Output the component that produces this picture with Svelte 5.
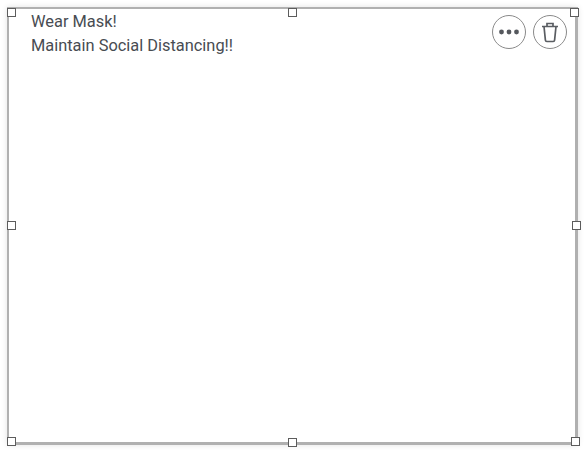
<script>
  const handles = ['tl', 'tc', 'tr', 'ml', 'mr', 'bl', 'bc', 'br'];
</script>

<main class="page">
  <div class="frame">
    {#each handles as h}
      <span class="handle {h}"></span>
    {/each}
    <div class="content">
      <div class="message">
        <p>Wear Mask!</p>
        <p>Maintain Social Distancing!!</p>
      </div>
      <div class="actions">
        <button class="round" aria-label="More">
          <svg width="24" height="8" viewBox="0 0 24 8">
            <circle cx="4.5" cy="4" r="2.4" />
            <circle cx="12" cy="4" r="2.4" />
            <circle cx="19.5" cy="4" r="2.4" />
          </svg>
        </button>
        <button class="round" aria-label="Delete">
          <svg class="trash" width="20" height="22" viewBox="0 0 20 22">
            <path d="M2 5.5h16M7 5.5V2.5h6v3M4 5.5l1.4 13.7c.1.9.6 1.3 1.4 1.3h6.4c.8 0 1.3-.4 1.4-1.3L16 5.5" />
          </svg>
        </button>
      </div>
    </div>
  </div>
</main>

<style>
  :global(body) {
    margin: 0;
    background: #fff;
  }

  .page {
    width: 585px;
    height: 450px;
    box-sizing: border-box;
    padding: 7px 0 0 7px;
    overflow: hidden;
    font-family: Roboto, "Liberation Sans", sans-serif;
  }

  .frame {
    position: relative;
    width: 571px;
    height: 438px;
    box-sizing: border-box;
    border: 2px solid #b0b0b0;
    border-right-width: 3px;
    border-bottom-width: 3px;
    box-shadow: 0 0 6px rgba(0, 0, 0, 0.12);
  }

  .content {
    display: flex;
    justify-content: space-between;
    padding: 1px 8px 0 22px;
  }

  .message p {
    margin: 0;
    font-size: 16.4px;
    line-height: 24px;
    color: #484c52;
  }

  .actions {
    display: flex;
    gap: 7px;
    padding-top: 5px;
  }

  .round {
    display: flex;
    align-items: center;
    justify-content: center;
    width: 34px;
    height: 34px;
    padding: 0;
    border: 1.5px solid #8a8a8a;
    border-radius: 50%;
    background: #fff;
  }

  .round circle {
    fill: #55585d;
  }

  .trash path {
    fill: none;
    stroke: #5a5d62;
    stroke-width: 1.7;
  }

  .handle {
    position: absolute;
    width: 9px;
    height: 9px;
    box-sizing: border-box;
    border: 1.5px solid #5c5c5c;
    background: #fff;
  }

  .tl { left: -2px; top: -1px; }
  .tc { left: 279px; top: -1px; }
  .tr { left: 561px; top: -1px; }
  .ml { left: -2px; top: 212px; }
  .mr { left: 563px; top: 212px; }
  .bl { left: -2px; top: 428px; }
  .bc { left: 279px; top: 429px; }
  .br { left: 562px; top: 428px; }
</style>
